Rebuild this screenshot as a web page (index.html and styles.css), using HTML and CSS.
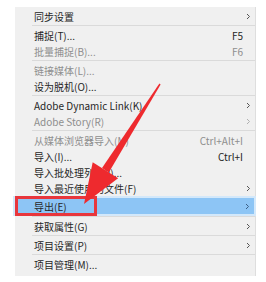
FILE: index.html
```html
<!DOCTYPE html>
<html lang="zh-CN">

<head>
    <meta charset="UTF-8">
    <title>菜单</title>
    <link rel="stylesheet" href="styles.css">
</head>

<body>
    <div class="menu">
        <div class="item"><span class="label">同步设置</span><span class="key"></span><span class="more"><svg width="5" height="7" viewBox="0 0 5 7"><polyline points="1,1 3.5,3.5 1,6" /></svg></span></div>
        <div class="sep"></div>
        <div class="item"><span class="label">捕捉(T)...</span><span class="key">F5</span><span class="more"></span></div>
        <div class="item off"><span class="label">批量捕捉(B)...</span><span class="key">F6</span><span class="more"></span></div>
        <div class="sep"></div>
        <div class="item off"><span class="label">链接媒体(L)...</span><span class="key"></span><span class="more"></span></div>
        <div class="item"><span class="label">设为脱机(O)...</span><span class="key"></span><span class="more"></span></div>
        <div class="sep"></div>
        <div class="item"><span class="label">Adobe Dynamic Link(K)</span><span class="key"></span><span class="more"><svg width="5" height="7" viewBox="0 0 5 7"><polyline points="1,1 3.5,3.5 1,6" /></svg></span></div>
        <div class="item off"><span class="label">Adobe Story(R)</span><span class="key"></span><span class="more"><svg width="5" height="7" viewBox="0 0 5 7"><polyline points="1,1 3.5,3.5 1,6" /></svg></span></div>
        <div class="sep"></div>
        <div class="item off"><span class="label">从媒体浏览器导入(M)</span><span class="key">Ctrl+Alt+I</span><span class="more"></span></div>
        <div class="item"><span class="label">导入(I)...</span><span class="key">Ctrl+I</span><span class="more"></span></div>
        <div class="item"><span class="label">导入批处理列表(I)...</span><span class="key"></span><span class="more"></span></div>
        <div class="item"><span class="label">导入最近使用的文件(F)</span><span class="key"></span><span class="more"><svg width="5" height="7" viewBox="0 0 5 7"><polyline points="1,1 3.5,3.5 1,6" /></svg></span></div>
        <div class="item active">
            <span class="label">导出(E)</span><span class="key"></span><span class="more"><svg width="5" height="7" viewBox="0 0 5 7"><polyline points="1,1 3.5,3.5 1,6" /></svg></span>
            <div class="mark"></div>
        </div>
        <div class="sep"></div>
        <div class="item"><span class="label">获取属性(G)</span><span class="key"></span><span class="more"><svg width="5" height="7" viewBox="0 0 5 7"><polyline points="1,1 3.5,3.5 1,6" /></svg></span></div>
        <div class="sep"></div>
        <div class="item"><span class="label">项目设置(P)</span><span class="key"></span><span class="more"><svg width="5" height="7" viewBox="0 0 5 7"><polyline points="1,1 3.5,3.5 1,6" /></svg></span></div>
        <div class="sep"></div>
        <div class="item"><span class="label">项目管理(M)...</span><span class="key"></span><span class="more"></span></div>
    </div>

    <svg class="pointer" width="266" height="282" viewBox="0 0 266 282">
        <polygon points="160.6,84.4 159.4,83.6 102,168 108.8,172.4" />
        <polygon points="84,204 92.7,162.2 118.1,178.2" />
    </svg>
</body>

</html>
```

FILE: styles.css
```css
body {
    margin: 0;
    background-color: #ffffff;
    font-family: "Noto Sans CJK SC", "Noto Sans", sans-serif;
    font-size: 10px;
    color: #262626;
    position: relative;
    width: 266px;
    height: 282px;
    overflow: hidden;
}

.menu {
    margin: 7px 0 0 15px;
    width: 240px;
    padding: 1px 0 4px;
    background-color: #f0f0f0;
    border-right: 1px solid #dedede;
}

.item {
    display: flex;
    align-items: center;
    height: 16px;
    padding-left: 19px;
    position: relative;
}

.label {
    flex: 1;
    white-space: nowrap;
}

.key {
    padding-right: 3px;
}

.more {
    width: 9px;
    display: flex;
    align-items: center;
}

.more polyline {
    fill: none;
    stroke: #555;
    stroke-width: 1;
}

.off {
    color: #8e8e8e;
}

.off .more polyline {
    stroke: #b0b0b0;
}

.sep {
    height: 1px;
    margin: 1px 0 1px 17px;
    background-color: #dadada;
}

.active {
    margin: 2px 1px 2px 0;
    background-color: #8dc5f5;
    box-shadow: 0 0 0 2px #d3e8fa;
}

.active .more polyline {
    stroke: #3b5f86;
}

.mark {
    position: absolute;
    left: 0;
    top: -2px;
    width: 76px;
    height: 14px;
    border: 3px solid #e8363c;
}

.pointer {
    position: absolute;
    left: 0;
    top: 0;
}

.pointer polygon {
    fill: #ee2a2e;
}
```
